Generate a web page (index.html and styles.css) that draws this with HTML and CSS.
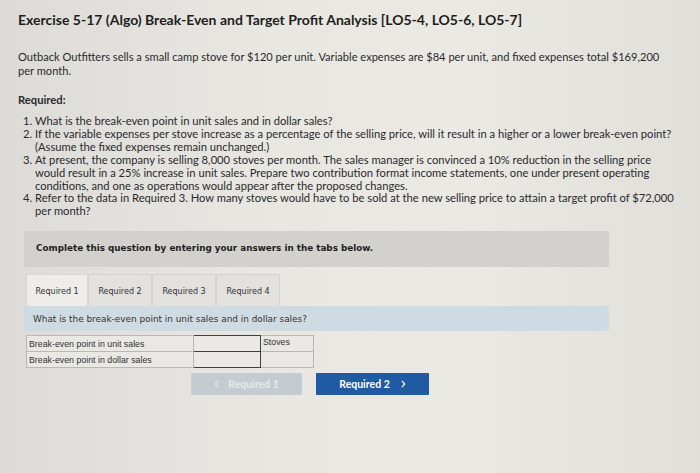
FILE: index.html
```html
<!DOCTYPE html>
<html>
<head>
<meta charset="utf-8">
<link rel="stylesheet" href="styles.css">
</head>
<body>
<div class="page">
  <h1 class="title">Exercise 5-17 (Algo) Break-Even and Target Profit Analysis [LO5-4, LO5-6, LO5-7]</h1>
  <p class="intro">Outback Outfitters sells a small camp stove for $120 per unit. Variable expenses are $84 per unit, and fixed expenses total $169,200<br>per month.</p>
  <p class="req">Required:</p>
  <ol class="list">
    <li>What is the break-even point in unit sales and in dollar sales?</li>
    <li>If the variable expenses per stove increase as a percentage of the selling price, will it result in a higher or a lower break-even point?<br>(Assume the fixed expenses remain unchanged.)</li>
    <li>At present, the company is selling 8,000 stoves per month. The sales manager is convinced a 10% reduction in the selling price<br>would result in a 25% increase in unit sales. Prepare two contribution format income statements, one under present operating<br>conditions, and one as operations would appear after the proposed changes.</li>
    <li>Refer to the data in Required 3. How many stoves would have to be sold at the new selling price to attain a target profit of $72,000<br>per month?</li>
  </ol>
  <div class="panel">
    <div class="banner">Complete this question by entering your answers in the tabs below.</div>
    <div class="tabs">
      <div class="tab active">Required 1</div>
      <div class="tab">Required 2</div>
      <div class="tab">Required 3</div>
      <div class="tab">Required 4</div>
    </div>
    <div class="question">What is the break-even point in unit sales and in dollar sales?</div>
    <table class="grid">
      <tr><td class="label">Break-even point in unit sales</td><td class="input"></td><td class="unit">Stoves</td></tr>
      <tr><td class="label">Break-even point in dollar sales</td><td class="input"></td><td class="unit"></td></tr>
    </table>
    <div class="nav">
      <div class="btn prev"><svg class="chev" viewBox="0 0 6 10" width="5" height="8"><path d="M5 1 L1.5 5 L5 9" fill="none" stroke="#e4e8ea" stroke-width="1.6"/></svg>Required 1</div>
      <div class="btn next">Required 2<svg class="chev" viewBox="0 0 6 10" width="5" height="8"><path d="M1 1 L4.5 5 L1 9" fill="none" stroke="#ffffff" stroke-width="1.6"/></svg></div>
    </div>
  </div>
</div>
</body>
</html>
```
FILE: styles.css
```css
html, body {
  margin: 0;
  padding: 0;
}
body {
  width: 700px;
  height: 473px;
  overflow: hidden;
  background: linear-gradient(90deg, #dcdbd8 0%, #e8e6e1 35%, #ebe9e4 65%, #e0dfda 100%);
  font-family: Lato, "Liberation Sans", sans-serif;
  color: #2a2a2c;
}
.page {
  padding: 10px 0 0 18px;
}
.title {
  margin: 0;
  font-size: 14px;
  font-weight: 700;
  line-height: 20px;
  color: #1e1e20;
}
.intro {
  margin: 20px 0 0 0;
  white-space: nowrap;
  font-size: 11.1px;
  line-height: 14px;
}
.req {
  margin: 15px 0 0 0;
  font-size: 11.2px;
  font-weight: 700;
  line-height: 14px;
}
.list {
  margin: 8px 0 0 0;
  padding: 0 0 0 17px;
  white-space: nowrap;
  font-size: 11.2px;
  line-height: 12.9px;
}
.panel {
  margin: 13px 0 0 6px;
  width: 585px;
}
.banner {
  background: #d2d1ce;
  height: 36px;
  line-height: 34px;
  padding-left: 12px;
  font-family: "DejaVu Sans", sans-serif;
  font-size: 8.8px;
  font-weight: 700;
  color: #1f1f1f;
}
.tabs {
  display: flex;
  margin-top: 7px;
  padding-left: 2px;
}
.tab {
  width: 64px;
  height: 32px;
  line-height: 34px;
  text-align: center;
  background: #e2e1dd;
  border: 1px solid #d4d3cf;
  border-bottom: none;
  box-sizing: border-box;
  font-family: "DejaVu Sans", sans-serif;
  font-size: 8px;
  color: #333;
}
.tab.active {
  width: 62px;
  background: #eeede9;
  border-color: #d8d7d3;
}
.question {
  background: #cfdbe2;
  height: 25px;
  line-height: 27px;
  padding-left: 9px;
  font-family: "DejaVu Sans", sans-serif;
  font-size: 8.9px;
  color: #333;
}
.grid {
  margin: 4px 0 0 2px;
  border-collapse: collapse;
  font-family: "Liberation Sans", Arial, sans-serif;
  font-size: 8.8px;
  color: #333;
}
.grid td {
  border: 1px solid #b9b8b4;
  height: 14px;
  padding: 0 2px;
  background: #e9e8e4;
}
.grid td.label {
  width: 162px;
}
.grid td.input {
  width: 62px;
  border: 1.5px solid #3d4145;
  background: #eae9e5;
}
.grid td.unit {
  width: 48px;
  vertical-align: top;
  padding-top: 1px;
}
.nav {
  display: flex;
  gap: 14px;
  margin: 5px 0 0 167px;
}
.btn {
  width: 111px;
  height: 22px;
  display: flex;
  align-items: center;
  justify-content: center;
  gap: 9px;
  font-family: Lato, "Liberation Sans", sans-serif;
  font-size: 10.5px;
  font-weight: 700;
  border-radius: 1px;
}
.btn.prev {
  background: #c5ccd1;
  color: #e4e8ea;
}
.btn.next {
  width: 113px;
  gap: 11px;
  background: #1f5aa2;
  color: #ffffff;
}
.chev {
  display: block;
}
```
